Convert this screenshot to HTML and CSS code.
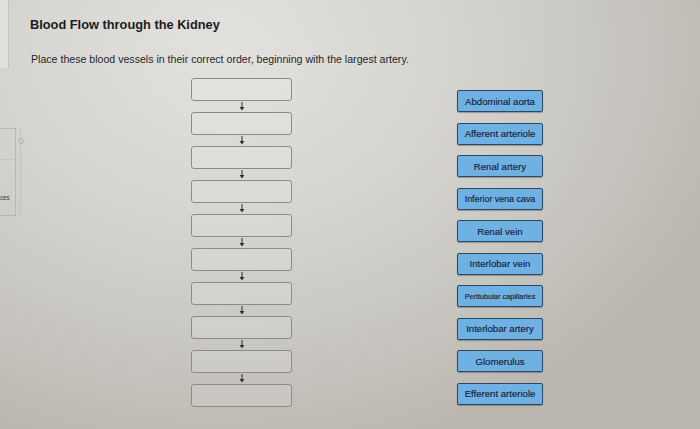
FILE: index.html
```html
<!DOCTYPE html>
<html lang="en">
<head>
<meta charset="utf-8">
<title>Blood Flow through the Kidney</title>
<link rel="stylesheet" href="styles.css">
</head>
<body>
  <div class="side-edge"></div>
  <div class="side-tab"><span class="side-tab-label">ces</span></div>
  <div class="side-rail"><span class="side-knob"></span></div>

  <main class="page">
    <h1 class="title">Blood Flow through the Kidney</h1>
    <p class="prompt">Place these blood vessels in their correct order, beginning with the largest artery.</p>

    <div class="board">
      <ol class="targets">
        <li class="slot"><div class="drop"></div><div class="link"><svg viewBox="0 0 6 9" width="6" height="9"><path d="M3 0V6" stroke="#2e2e2e" stroke-width="1"/><path d="M0.6 5L3 8.6L5.4 5Z" fill="#2e2e2e"/></svg></div></li>
        <li class="slot"><div class="drop"></div><div class="link"><svg viewBox="0 0 6 9" width="6" height="9"><path d="M3 0V6" stroke="#2e2e2e" stroke-width="1"/><path d="M0.6 5L3 8.6L5.4 5Z" fill="#2e2e2e"/></svg></div></li>
        <li class="slot"><div class="drop"></div><div class="link"><svg viewBox="0 0 6 9" width="6" height="9"><path d="M3 0V6" stroke="#2e2e2e" stroke-width="1"/><path d="M0.6 5L3 8.6L5.4 5Z" fill="#2e2e2e"/></svg></div></li>
        <li class="slot"><div class="drop"></div><div class="link"><svg viewBox="0 0 6 9" width="6" height="9"><path d="M3 0V6" stroke="#2e2e2e" stroke-width="1"/><path d="M0.6 5L3 8.6L5.4 5Z" fill="#2e2e2e"/></svg></div></li>
        <li class="slot"><div class="drop"></div><div class="link"><svg viewBox="0 0 6 9" width="6" height="9"><path d="M3 0V6" stroke="#2e2e2e" stroke-width="1"/><path d="M0.6 5L3 8.6L5.4 5Z" fill="#2e2e2e"/></svg></div></li>
        <li class="slot"><div class="drop"></div><div class="link"><svg viewBox="0 0 6 9" width="6" height="9"><path d="M3 0V6" stroke="#2e2e2e" stroke-width="1"/><path d="M0.6 5L3 8.6L5.4 5Z" fill="#2e2e2e"/></svg></div></li>
        <li class="slot"><div class="drop"></div><div class="link"><svg viewBox="0 0 6 9" width="6" height="9"><path d="M3 0V6" stroke="#2e2e2e" stroke-width="1"/><path d="M0.6 5L3 8.6L5.4 5Z" fill="#2e2e2e"/></svg></div></li>
        <li class="slot"><div class="drop"></div><div class="link"><svg viewBox="0 0 6 9" width="6" height="9"><path d="M3 0V6" stroke="#2e2e2e" stroke-width="1"/><path d="M0.6 5L3 8.6L5.4 5Z" fill="#2e2e2e"/></svg></div></li>
        <li class="slot"><div class="drop"></div><div class="link"><svg viewBox="0 0 6 9" width="6" height="9"><path d="M3 0V6" stroke="#2e2e2e" stroke-width="1"/><path d="M0.6 5L3 8.6L5.4 5Z" fill="#2e2e2e"/></svg></div></li>
        <li class="slot"><div class="drop"></div></li>
      </ol>

      <ul class="choices">
        <li class="chip">Abdominal aorta</li>
        <li class="chip">Afferent arteriole</li>
        <li class="chip">Renal artery</li>
        <li class="chip chip-snug">Inferior vena cava</li>
        <li class="chip">Renal vein</li>
        <li class="chip">Interlobar vein</li>
        <li class="chip chip-tiny">Peritubular capillaries</li>
        <li class="chip">Interlobar artery</li>
        <li class="chip">Glomerulus</li>
        <li class="chip">Efferent arteriole</li>
      </ul>
    </div>
  </main>
</body>
</html>
```

FILE: styles.css
```css
html, body {
  margin: 0;
  height: 100%;
}

body {
  position: relative;
  overflow: hidden;
  font-family: "Liberation Sans", Arial, sans-serif;
  color: #222;
  background:
    radial-gradient(ellipse 75% 95% at 32% 12%, #e3e1dd 0%, #d9d7d3 35%, #cac8c3 70%, #bcb7b0 100%);
}

/* neighbouring window fragment at the far left */
.side-edge {
  position: absolute;
  left: 0;
  top: 0;
  width: 8px;
  height: 68px;
  border-right: 1px solid #c4c2be;
  background: #e2e0dc;
}

.side-tab {
  position: absolute;
  left: 0;
  top: 128px;
  width: 16px;
  height: 88px;
  border: 1px solid #b9b7b2;
  border-left: none;
  display: flex;
  align-items: flex-end;
  justify-content: flex-start;
  padding-bottom: 14px;
  box-sizing: border-box;
}

.side-tab::before {
  content: "";
  position: absolute;
  left: 0;
  right: 0;
  top: 30px;
  border-top: 1px solid #c6c4c0;
}

.side-tab-label {
  font-size: 6.5px;
  letter-spacing: -0.2px;
  color: #3d3d3d;
  padding-left: 0;
}

.side-rail {
  position: absolute;
  left: 20px;
  top: 128px;
  height: 88px;
  border-left: 1px solid #c4c2be;
}

.side-knob {
  position: absolute;
  left: -3px;
  top: 10px;
  width: 4px;
  height: 4px;
  border: 1px solid #b3b1ad;
  border-radius: 50%;
}

/* question */
.page {
  padding: 17px 0 0 30px;
}

.title {
  margin: 0;
  font-size: 12.8px;
  line-height: 15px;
  font-weight: bold;
  color: #1b1b1b;
}

.prompt {
  margin: 21px 0 0 1px;
  font-size: 10.6px;
  line-height: 13px;
  color: #262626;
}

.board {
  display: flex;
  align-items: flex-start;
  margin-top: 12px;
}

.targets,
.choices {
  list-style: none;
  margin: 0;
  padding: 0;
}

.targets {
  margin-left: 161px;
  width: 101px;
  display: flex;
  flex-direction: column;
}

.slot {
  display: flex;
  flex-direction: column;
}

.drop {
  height: 23px;
  box-sizing: border-box;
  border: 1.5px solid #8c8b88;
  border-radius: 3px;
  background: rgba(255, 255, 255, 0.12);
}

.link {
  height: 11px;
  display: flex;
  align-items: center;
  justify-content: center;
}

.link svg {
  display: block;
}

.choices {
  margin-left: 165px;
  margin-top: 12px;
  width: 86px;
  display: flex;
  flex-direction: column;
  gap: 10.5px;
}

.chip {
  height: 22px;
  box-sizing: border-box;
  display: flex;
  align-items: center;
  justify-content: center;
  border: 1px solid #2c4761;
  border-radius: 2px;
  background: #6fb1e3;
  box-shadow: 0 1px 1px rgba(40, 50, 60, 0.35);
  font-size: 9.6px;
  color: #14223a;
  -webkit-text-stroke: 0.15px #14223a;
  white-space: nowrap;
}

.chip-snug {
  font-size: 8.9px;
}

.chip-tiny {
  font-size: 7.4px;
}
```
